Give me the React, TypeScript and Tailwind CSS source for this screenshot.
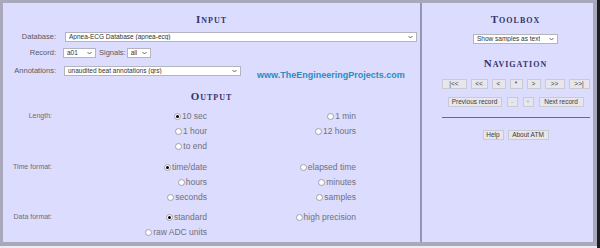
import React from "react";

const sans = "font-['Liberation_Sans',Arial,sans-serif]";

function Heading({ children }: { children: string }) {
  return (
    <div className="h-[16px] flex items-center justify-center font-['Liberation_Serif',serif] font-bold text-[11px] leading-none tracking-[1px] text-[#34346a] [font-variant:small-caps]">
      {children}
    </div>
  );
}

function Select({ value, w, h = "h-[10px]" }: { value: string; w: string; h?: string }) {
  return (
    <div
      className={`${w} ${h} flex items-center justify-between bg-white border border-[#b4b4bc] pl-[3px] pr-[3px] text-[6.5px] text-[#333] leading-none`}
    >
      <span className="truncate">{value}</span>
      <svg width="5" height="4" viewBox="0 0 5 4" className="shrink-0">
        <path d="M0.5 1 L2.5 3 L4.5 1" fill="none" stroke="#666" strokeWidth="1" />
      </svg>
    </div>
  );
}

function Radio({ label, checked = false }: { label: string; checked?: boolean }) {
  return (
    <div className="h-[15px] flex items-center justify-end gap-[1px] text-[8.5px] text-[#717179] leading-none">
      <span className="w-[7px] h-[7px] rounded-full border border-[#a0a0aa] bg-white flex items-center justify-center">
        {checked && <span className="w-[3px] h-[3px] rounded-full bg-black" />}
      </span>
      <span>{label}</span>
    </div>
  );
}

function Btn({ label, w, disabled = false }: { label: string; w: string; disabled?: boolean }) {
  return (
    <div
      className={`${w} h-[10px] flex items-center justify-center bg-[#e6e6ec] border border-[#cacad2] text-[6.5px] leading-none ${
        disabled ? "text-[#b0b0b8]" : "text-[#3a3a40]"
      }`}
    >
      {label}
    </div>
  );
}

type Group = { label: string; col1: [string, boolean][]; col2: [string, boolean][] };

const groups: Group[] = [
  {
    label: "Length:",
    col1: [["10 sec", true], ["1 hour", false], ["to end", false]],
    col2: [["1 min", false], ["12 hours", false]],
  },
  {
    label: "Time format:",
    col1: [["time/date", true], ["hours", false], ["seconds", false]],
    col2: [["elapsed time", false], ["minutes", false], ["samples", false]],
  },
  {
    label: "Data format:",
    col1: [["standard", true], ["raw ADC units", false]],
    col2: [["high precision", false]],
  },
];

export default function App() {
  return (
    <div className={`w-[600px] h-[248px] bg-[#ececf2] flex ${sans}`}>
      <div className="w-[597px] h-[246px] border-t-[3px] border-l-[3px] border-r-[4px] border-b-[4px] border-[#a9a9bb] bg-[#dcdcfe] flex">
        {/* input / output */}
        <div className="w-[417px] flex flex-col">
          <div className="mt-[8px]">
            <Heading>Input</Heading>
          </div>
          <div className="mt-[4px] h-[12px] flex items-center">
            <span className="w-[53px] text-right text-[7.5px] text-[#5a5a62]">Database:</span>
            <div className="ml-[9px]">
              <Select value="Apnea-ECG Database (apnea-ecg)" w="w-[352px]" />
            </div>
          </div>
          <div className="mt-[4px] h-[12px] flex items-center">
            <span className="w-[53px] text-right text-[7.5px] text-[#5a5a62]">Record:</span>
            <div className="ml-[7px]">
              <Select value="a01" w="w-[33px]" />
            </div>
            <span className="ml-[3px] text-[7.5px] text-[#5a5a62]">Signals:</span>
            <div className="ml-[1px]">
              <Select value="all" w="w-[24px]" />
            </div>
          </div>
          <div className="mt-[6px] h-[12px] flex items-center">
            <span className="w-[53px] text-right text-[7.5px] text-[#5a5a62]">Annotations:</span>
            <div className="ml-[8px]">
              <Select value="unaudited beat annotations (qrs)" w="w-[177px]" />
            </div>
            <span className="ml-[16px] mt-[8px] font-bold text-[9px] text-[#2a8cc0] leading-none">
              www.TheEngineeringProjects.com
            </span>
          </div>
          <div className="mt-[11px]">
            <Heading>Output</Heading>
          </div>
          <div className="mt-[5px] flex flex-col">
            {groups.map((g, gi) => (
              <div
                key={g.label}
                className={`grid grid-cols-[49px_155px_149px] ${gi === 1 ? "mt-[6px]" : gi === 2 ? "mt-[5px]" : ""}`}
              >
                <div className="h-[15px] flex items-center justify-end text-[7px] text-[#6e6e76]">{g.label}</div>
                <div className="flex flex-col">
                  {g.col1.map(([l, c]) => (
                    <Radio key={l} label={l} checked={c} />
                  ))}
                </div>
                <div className="flex flex-col">
                  {g.col2.map(([l, c]) => (
                    <Radio key={l} label={l} checked={c} />
                  ))}
                </div>
              </div>
            ))}
          </div>
        </div>

        <div className="w-[2px] bg-[#9494b4]" />

        {/* toolbox / navigation */}
        <div className="flex-1 pl-[16px] flex flex-col items-center">
          <div className="mt-[8px] w-full">
            <Heading>Toolbox</Heading>
          </div>
          <div className="mt-[7px]">
            <Select value="Show samples as text" w="w-[85px]" />
          </div>
          <div className="mt-[11px] w-full">
            <Heading>Navigation</Heading>
          </div>
          <div className="mt-[8px] flex gap-[4px]">
            <Btn label="|<<" w="w-[25px]" />
            <Btn label="<<" w="w-[17px]" />
            <Btn label="<" w="w-[14px]" />
            <Btn label="*" w="w-[13px]" />
            <Btn label=">" w="w-[14px]" />
            <Btn label=">>" w="w-[20px]" />
            <Btn label=">>|" w="w-[21px]" />
          </div>
          <div className="mt-[8px] flex gap-[5px]">
            <Btn label="Previous record" w="w-[54px]" />
            <Btn label="-" w="w-[11px]" disabled />
            <Btn label="+" w="w-[11px]" disabled />
            <Btn label="Next record" w="w-[45px]" />
          </div>
          <div className="mt-[10px] w-[148px] h-[1px] bg-[#6a6a78]" />
          <div className="mt-[12px] flex gap-[4px]">
            <Btn label="Help" w="w-[21px]" />
            <Btn label="About ATM" w="w-[41px]" />
          </div>
        </div>
      </div>
      <div className="w-[3px] h-[248px] bg-[#1e1e22]" />
    </div>
  );
}
